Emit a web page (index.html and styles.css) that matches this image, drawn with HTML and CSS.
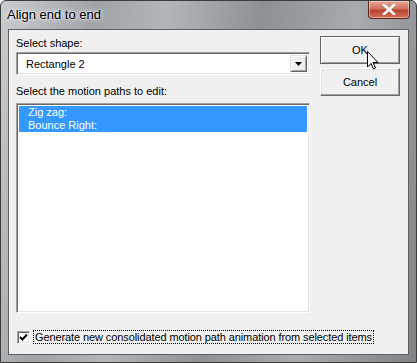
FILE: index.html
```html
<!DOCTYPE html>
<html lang="en">
<head>
    <meta charset="UTF-8">
    <title>Align end to end</title>
    <link rel="stylesheet" href="styles.css">
</head>
<body>
    <div class="window">
        <div class="titlebar">
            <span class="title">Align end to end</span>
            <button class="close" aria-label="Close">
                <svg width="14" height="11" viewBox="0 0 14 11">
                    <path d="M2 1 L12 10 M12 1 L2 10" stroke="#fff" stroke-width="2.6" stroke-linecap="square" fill="none"/>
                </svg>
            </button>
        </div>

        <div class="client">
            <div class="main">
                <label class="label">Select shape:</label>
                <div class="combo">
                    <span class="combo-text">Rectangle 2</span>
                    <span class="combo-arrow">
                        <svg width="7" height="4" viewBox="0 0 7 4"><path d="M0 0 H7 L3.5 4 Z" fill="#000"/></svg>
                    </span>
                </div>

                <label class="label label-paths">Select the motion paths to edit:</label>
                <div class="listbox">
                    <div class="item selected">Zig zag:</div>
                    <div class="item selected">Bounce Right:</div>
                </div>

                <div class="check-row">
                    <span class="checkbox">
                        <svg width="9" height="9" viewBox="0 0 9 9"><path d="M1 4 L3.5 6.5 L8 1.5" stroke="#000" stroke-width="2" fill="none"/></svg>
                    </span>
                    <span class="check-label">Generate new consolidated motion path animation from selected items</span>
                </div>
            </div>

            <div class="buttons">
                <button class="btn default">OK</button>
                <button class="btn">Cancel</button>
            </div>
        </div>

        <!-- mouse pointer sitting on the OK button -->
        <svg class="cursor" width="12" height="19" viewBox="0 0 12 19">
            <path d="M0.5 0.5 V16 L4 12.5 L6.5 18 L8.5 17 L6 11.5 H11 Z" fill="#fff" stroke="#000" stroke-width="1"/>
        </svg>
    </div>
</body>
</html>
```

FILE: styles.css
```css
body {
    margin: 0;
    padding: 0;
    background: #fff;
}

.window {
    position: relative;
    width: 417px;
    height: 363px;
    box-sizing: border-box;
    padding: 0 7px 7px 7px;
    background: linear-gradient(100deg, #c9cdd0 0%, #9fa3a6 20%, #b3b6b8 35%, #8d9193 55%, #a8abad 75%, #7f8386 100%);
    border: 1px solid #3c3c3c;
    border-radius: 6px 6px 0 0;
    font-family: "Liberation Sans", Arial, sans-serif;
}

.titlebar {
    height: 28px;
    display: flex;
    align-items: flex-start;
    justify-content: space-between;
}

.title {
    margin-top: 6px;
    margin-left: -1px;
    font-size: 13px;
    color: #000;
    text-shadow: 0 0 6px #fff, 0 0 3px #fff;
}

.close {
    width: 42px;
    height: 18px;
    margin-right: -1px;
    padding: 0;
    border: 1px solid #5a2a22;
    border-top: none;
    border-radius: 0 0 4px 4px;
    background: linear-gradient(#e8a898 0%, #d07060 45%, #b8432e 55%, #d6705a 100%);
    display: flex;
    align-items: center;
    justify-content: center;
    box-shadow: inset 0 0 0 1px rgba(255, 255, 255, 0.4);
}

.client {
    height: 326px;
    box-sizing: border-box;
    background: #f0f0f0;
    border: 1px solid #5d6063;
    display: flex;
    padding: 6px 8px 0 7px;
}

.main {
    width: 294px;
    flex-shrink: 0;
    display: flex;
    flex-direction: column;
}

.label {
    font-size: 11px;
    line-height: 13px;
    height: 14px;
    color: #000;
    margin-top: 1px;
}

.combo {
    height: 23px;
    box-sizing: border-box;
    margin-top: 1px;
    background: #fff;
    border-top: 1px solid #a0a0a0;
    border-left: 1px solid #a0a0a0;
    border-right: 1px solid #fff;
    border-bottom: 1px solid #fff;
    box-shadow: inset 1px 1px 0 #696969, inset -1px -1px 0 #e3e3e3;
    display: flex;
    align-items: center;
    justify-content: space-between;
    padding: 2px;
}

.combo-text {
    font-size: 11px;
    padding-left: 7px;
}

.combo-arrow {
    width: 17px;
    height: 17px;
    box-sizing: border-box;
    background: #f0f0f0;
    border-top: 1px solid #e3e3e3;
    border-left: 1px solid #e3e3e3;
    border-right: 1px solid #696969;
    border-bottom: 1px solid #696969;
    box-shadow: inset 1px 1px 0 #fff, inset -1px -1px 0 #a0a0a0;
    display: flex;
    align-items: center;
    justify-content: center;
}

.label-paths {
    margin-top: 10px;
}

.listbox {
    height: 210px;
    box-sizing: border-box;
    margin-top: 4px;
    background: #fff;
    border-top: 1px solid #a0a0a0;
    border-left: 1px solid #a0a0a0;
    border-right: 1px solid #fff;
    border-bottom: 1px solid #fff;
    box-shadow: inset 1px 1px 0 #696969, inset -1px -1px 0 #e3e3e3;
    padding: 2px 2px;
}

.item {
    font-size: 11px;
    line-height: 13px;
    padding-left: 9px;
    color: #000;
}

.item.selected {
    background: #3399ff;
    color: #fff;
}

.check-row {
    display: flex;
    align-items: center;
    margin-top: 17px;
    white-space: nowrap;
}

.checkbox {
    width: 13px;
    height: 13px;
    flex-shrink: 0;
    box-sizing: border-box;
    margin-left: 1px;
    background: #fff;
    border-top: 1px solid #a0a0a0;
    border-left: 1px solid #a0a0a0;
    border-right: 1px solid #fff;
    border-bottom: 1px solid #fff;
    box-shadow: inset 1px 1px 0 #696969, inset -1px -1px 0 #e3e3e3;
    display: flex;
    align-items: center;
    justify-content: center;
}

.check-label {
    flex-shrink: 0;
    margin-left: 3px;
    font-size: 11px;
    line-height: 12px;
    letter-spacing: -0.1px;
    padding: 0 1px;
    border: 1px dotted #000;
    color: #000;
}

.buttons {
    display: flex;
    flex-direction: column;
    gap: 4px;
    margin-left: 10px;
}

.btn {
    width: 80px;
    height: 28px;
    box-sizing: border-box;
    font-family: "Liberation Sans", Arial, sans-serif;
    font-size: 11px;
    color: #000;
    background: #f0f0f0;
    border-top: 1px solid #fff;
    border-left: 1px solid #fff;
    border-right: 1px solid #696969;
    border-bottom: 1px solid #696969;
    box-shadow: inset -1px -1px 0 #a0a0a0, inset 1px 1px 0 #e3e3e3;
    padding: 0;
}

.btn.default {
    outline: 1px solid #646464;
    outline-offset: -1px;
    border-top-color: #646464;
    border-left-color: #646464;
    box-shadow: inset 1px 1px 0 #fff, inset -1px -1px 0 #a0a0a0;
}

.cursor {
    position: absolute;
    left: 366px;
    top: 50px;
}
```
